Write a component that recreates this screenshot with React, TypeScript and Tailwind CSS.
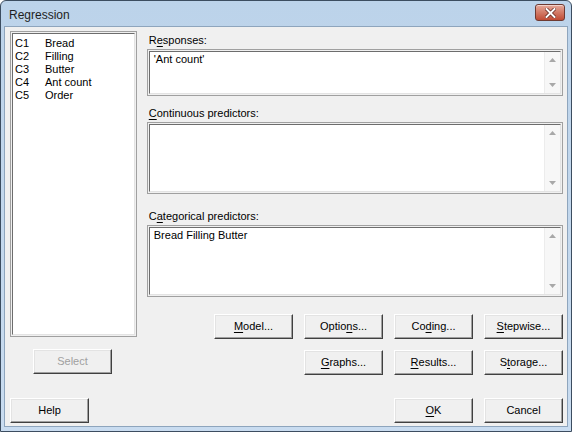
import React from 'react';

const font = { fontFamily: '"Liberation Sans", Arial, sans-serif' };

// Label text with one underlined access-key letter
function Mnemonic({ text, at }: { text: string; at: number }) {
  if (at < 0) return <>{text}</>;
  return (
    <>
      {text.slice(0, at)}
      <span className="underline underline-offset-[2px]">{text[at]}</span>
      {text.slice(at + 1)}
    </>
  );
}

function Button({
  label,
  at = -1,
  disabled = false,
  className = '',
}: {
  label: string;
  at?: number;
  disabled?: boolean;
  className?: string;
}) {
  return (
    <button
      className={`w-[79px] h-[25px] flex items-center justify-center bg-[#f0f0f0] border-t border-l border-t-white border-l-white border-r border-b border-r-[#404040] border-b-[#404040] shadow-[inset_-1px_-1px_0_#a0a0a0,inset_1px_1px_0_#e3e3e3] text-[11px] leading-none ${
        disabled ? 'text-[#a0a0a0]' : 'text-black'
      } ${className}`}
    >
      <Mnemonic text={label} at={at} />
    </button>
  );
}

function ScrollArrows() {
  return (
    <div className="w-[16px] flex flex-col justify-between items-center bg-[#f7f7f7] border-l border-[#ececec] py-[6px]">
      <svg width="7" height="4" viewBox="0 0 7 4">
        <path d="M3.5 0 L7 4 L0 4 Z" fill="#a8a8a8" />
      </svg>
      <svg width="7" height="4" viewBox="0 0 7 4">
        <path d="M0 0 L7 0 L3.5 4 Z" fill="#a8a8a8" />
      </svg>
    </div>
  );
}

function Field({
  label,
  at,
  height,
  value,
  className = '',
}: {
  label: string;
  at: number;
  height: string;
  value?: string;
  className?: string;
}) {
  return (
    <div className={`flex flex-col ${className}`}>
      <div className="h-[13px] leading-[13px] text-[11px] pl-[2px] mb-[2px]">
        <Mnemonic text={label} at={at} />
      </div>
      <div className={`${height} border border-[#a0a0a0] bg-[#f0f0f0] p-px`}>
        <div className="h-full flex border-t border-l border-[#6d6d6d] border-r border-b border-r-[#e3e3e3] border-b-[#e3e3e3] bg-white">
          <div className="flex-1 px-[4px] pt-[1px] text-[11px] leading-[13px]">{value}</div>
          <ScrollArrows />
        </div>
      </div>
    </div>
  );
}

const columns = [
  ['C1', 'Bread'],
  ['C2', 'Filling'],
  ['C3', 'Butter'],
  ['C4', 'Ant count'],
  ['C5', 'Order'],
];

export default function App() {
  return (
    <div
      className="w-[572px] h-[432px] flex flex-col bg-gradient-to-b from-[#bcd3ea] to-[#c9dcf0] border border-[#3c4d60] rounded-t-[6px] overflow-hidden text-black"
      style={font}
    >
      {/* title bar */}
      <div className="h-[25px] shrink-0 flex items-center justify-between pl-[8px] pr-[6px]">
        <span className="text-[12px] text-[#1e1e1e] mt-[2px]">Regression</span>
        <div className="w-[30px] h-[17px] mb-[2px] rounded-[3px] border border-[#6e3a32] bg-gradient-to-b from-[#e6a99b] via-[#d27a66] to-[#c04a34] flex items-center justify-center shadow-[inset_0_1px_0_rgba(255,255,255,0.5)]">
          <svg width="11" height="10" viewBox="0 0 11 10">
            <path d="M1.5 1 L9.5 9 M9.5 1 L1.5 9" stroke="#5a2018" strokeWidth="3.4" strokeLinecap="square" />
            <path d="M1.5 1 L9.5 9 M9.5 1 L1.5 9" stroke="#ffffff" strokeWidth="2" strokeLinecap="square" />
          </svg>
        </div>
      </div>

      {/* dialog body */}
      <div className="flex-1 mx-[3px] mb-[4px] mr-[3px] bg-[#f0f0f0] border border-[#8ea5bd] flex flex-col pl-[5px] pr-[4px] pt-[4px]">
        <div className="flex">
          {/* column list */}
          <div className="flex flex-col w-[127px]">
            <div className="h-[306px] border border-[#a0a0a0] bg-[#f0f0f0] p-px">
              <div className="h-full border-t border-l border-[#6d6d6d] border-r border-b border-r-[#e3e3e3] border-b-[#e3e3e3] bg-white pt-[3px] pl-[2px]">
                {columns.map(([c, name]) => (
                  <div key={c} className="flex h-[13px] leading-[13px] text-[11px]">
                    <span className="w-[30px]">{c}</span>
                    <span>{name}</span>
                  </div>
                ))}
              </div>
            </div>
            <Button label="Select" disabled className="ml-[23px] mt-[12px]" />
          </div>

          {/* predictors and sub-dialog buttons */}
          <div className="flex flex-col w-[417px] ml-[10px] mt-[3px]">
            <Field label="Responses:" at={1} height="h-[47px]" value="'Ant count'" />
            <Field label="Continuous predictors:" at={0} height="h-[72px]" className="mt-[11px]" />
            <Field
              label="Categorical predictors:"
              at={1}
              height="h-[72px]"
              value="Bread Filling Butter"
              className="mt-[16px]"
            />
            <div className="flex justify-end gap-[11px] mt-[17px]">
              <Button label="Model..." at={0} />
              <Button label="Options..." at={5} />
              <Button label="Coding..." at={2} />
              <Button label="Stepwise..." at={0} />
            </div>
            <div className="flex justify-end gap-[11px] mt-[11px]">
              <Button label="Graphs..." at={0} />
              <Button label="Results..." at={0} />
              <Button label="Storage..." at={1} />
            </div>
          </div>
        </div>

        {/* bottom row */}
        <div className="flex mt-[23px]">
          <Button label="Help" />
          <div className="flex-1" />
          <div className="flex gap-[11px]">
            <Button label="OK" at={0} />
            <Button label="Cancel" />
          </div>
        </div>
      </div>
    </div>
  );
}
